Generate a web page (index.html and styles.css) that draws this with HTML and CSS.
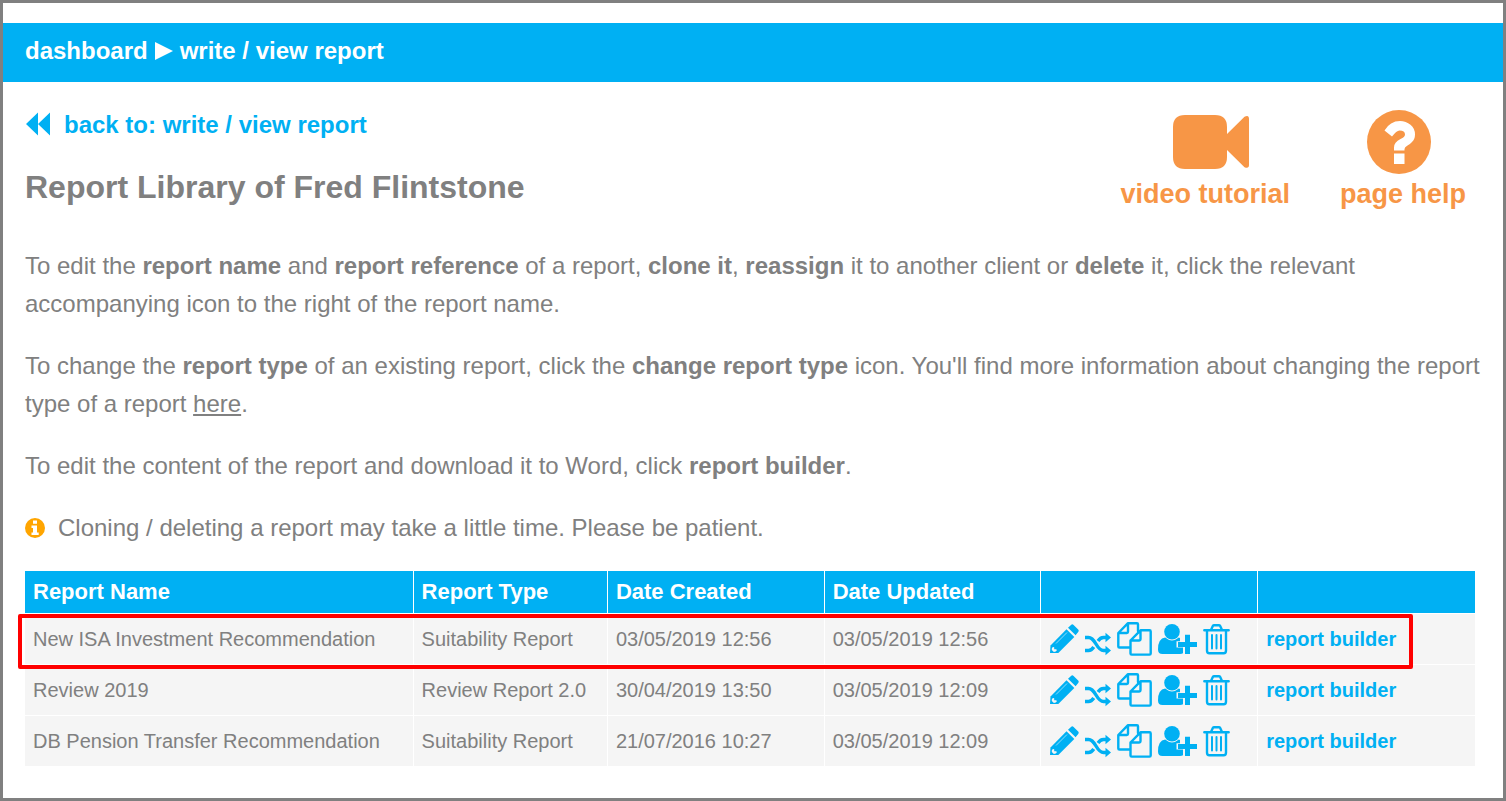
FILE: index.html
```html
<!DOCTYPE html>
<html lang="en">
<head>
<meta charset="utf-8">
<title>Report Library</title>
<link rel="stylesheet" href="styles.css">
</head>
<body>
<svg class="defs" aria-hidden="true">
  <symbol id="pencil" viewBox="0 0 30 36">
    <path d="M1.500 24.500L17.500 8.300L25.300 16L9.300 32H1z"/>
    <path d="M19 6.700L22 3.900Q23.300 2.700 24.600 3.900L29.200 8.500Q30.300 9.800 29.200 11L26.600 14.200z"/>
    <path class="cut" d="M2.900 27L4 25.900L5.200 26.200V28.300H7.400L7.800 29.400L6.700 30.600L4.900 30.900L2.800 28.900z"/>
    <path class="shine" d="M7 22.500L18 11.500"/>
  </symbol>
  <symbol id="shuffle" viewBox="0 0 26 36">
    <path class="line3" d="M0 16.500H3.500C11 16.500 11 29.500 18.500 29.500H22M0 29.500H3.500C6 29.500 7.500 28 8.800 26M13 20C14.300 18 16 16.500 18.500 16.500H22"/>
    <path d="M20.500 11.800L26 16.500L20.500 21.200zM20.500 24.800L26 29.500L20.500 34.200z"/>
  </symbol>
  <symbol id="copy" viewBox="0 0 35 36">
    <path class="line2" d="M12.500 26.500H2.400Q1.300 26.500 1.300 25.400V12L11 2.200H20Q21 2.200 21 3.200V10M11 2.500V10.800Q11 12 9.800 12H1.500"/>
    <path class="line2" d="M23.500 9.300H32.500Q33.700 9.300 33.700 10.500V32.400Q33.700 33.600 32.500 33.600H14.700Q13.500 33.600 13.500 32.400V19.500zM23.500 9.500V18.300Q23.500 19.500 22.300 19.500H13.500"/>
  </symbol>
  <symbol id="adduser" viewBox="0 0 39 36">
    <circle cx="14" cy="10.800" r="7.800"/>
    <path d="M7.200 16.600Q14 22.500 20.800 16.600L22 17V20.300H18.500V26.500H25V32.200Q24 33 22 33H4.500Q0 33 0 28.500Q0 17.500 7.200 16.600z"/>
    <path d="M27 13.700H32V21H39V26H32V33H27V26H20V21H27z"/>
  </symbol>
  <symbol id="trash" viewBox="0 0 28 36">
    <path class="line2" d="M1.300 9.200H25.700M8 9L9.800 5Q10.200 4.200 11.200 4.200H15.800Q16.800 4.200 17.200 5L19 9M4 9.500V29.500Q4 32.200 6.300 32.200H20.700Q23 32.200 23 29.500V9.500"/>
    <path class="line1" d="M9 14V27.500M13.500 14V27.500M18 14V27.500"/>
  </symbol>
</svg>

<div class="page">
  <nav class="crumbs" aria-label="Breadcrumb">
    <a href="#">dashboard</a>
    <svg class="crumb-arrow" viewBox="0 0 18 18" aria-hidden="true"><path d="M0 0L18 9L0 18z"/></svg>
    <a href="#">write / view report</a>
  </nav>

  <main class="content">
    <header class="top">
      <div class="titles">
        <a class="back" href="#">
          <svg viewBox="0 0 26 24" aria-hidden="true"><path d="M1 11L13 -0.500V22.500zM13 11L25 -0.500V22.500z"/></svg>
          back to: write / view report
        </a>
        <h1>Report Library of Fred Flintstone</h1>
      </div>
      <div class="help">
        <a href="#">
          <svg viewBox="-12 0 88 64" width="88" height="64" aria-hidden="true"><path d="M12 5H42Q54 5 54 17V24L71.500 6.800Q76 4.500 76 9V55Q76 59 71.500 57.200L54 40V47Q54 59 42 59H12Q0 59 0 47V17Q0 5 12 5z"/></svg>
          <span>video tutorial</span>
        </a>
        <a href="#">
          <svg viewBox="0 0 71 64" width="71" height="64" aria-hidden="true"><circle cx="32" cy="32" r="32"/><path class="white" d="M17.500 20.500Q23 11 33 11Q39 11 43.500 14.800Q48 18.500 48 24.500Q48 29 45 32Q43 34 40.500 35.500Q37.500 37.300 37.500 39V40.500H27V37.500Q27 32 33.500 29Q38 27 38 24.500Q38 20.500 32.500 20.500Q29.500 20.500 25 26.500zM27 43.500H37.500V54H27z"/></svg>
          <span>page help</span>
        </a>
      </div>
    </header>

    <p>To edit the <b>report name</b> and <b>report reference</b> of a report, <b>clone it</b>, <b>reassign</b> it to another client or <b>delete</b> it, click the relevant accompanying icon to the right of the report name.</p>
    <p>To change the <b>report type</b> of an existing report, click the <b>change report type</b> icon. You'll find more information about changing the report type of a report <a href="#">here</a>.</p>
    <p>To edit the content of the report and download it to Word, click <b>report builder</b>.</p>
    <p class="note">
      <svg viewBox="0 0 20 20" aria-hidden="true"><circle cx="10" cy="10" r="10"/><path class="white" d="M8 2.500H12V5.800H8zM6.500 7.500H12V14.500H13.700V17H6.500V14.500H8V10H6.500z"/></svg>
      Cloning / deleting a report may take a little time. Please be patient.
    </p>

    <div class="reports">
      <table>
        <colgroup><col class="name"><col class="type"><col><col><col><col></colgroup>
        <thead>
          <tr><th>Report Name</th><th>Report Type</th><th>Date Created</th><th>Date Updated</th><th></th><th></th></tr>
        </thead>
        <tbody>
          <tr>
            <td>New ISA Investment Recommendation</td><td>Suitability Report</td><td>03/05/2019 12:56</td><td>03/05/2019 12:56</td>
            <td><div class="actions">
              <button aria-label="Edit"><svg width="30" height="36"><use href="#pencil"/></svg></button>
              <button aria-label="Change report type"><svg width="26" height="36"><use href="#shuffle"/></svg></button>
              <button aria-label="Clone"><svg width="35" height="36"><use href="#copy"/></svg></button>
              <button aria-label="Reassign"><svg width="39" height="36"><use href="#adduser"/></svg></button>
              <button aria-label="Delete"><svg width="28" height="36"><use href="#trash"/></svg></button>
            </div></td>
            <td><a href="#">report builder</a></td>
          </tr>
          <tr>
            <td>Review 2019</td><td>Review Report 2.0</td><td>30/04/2019 13:50</td><td>03/05/2019 12:09</td>
            <td><div class="actions">
              <button aria-label="Edit"><svg width="30" height="36"><use href="#pencil"/></svg></button>
              <button aria-label="Change report type"><svg width="26" height="36"><use href="#shuffle"/></svg></button>
              <button aria-label="Clone"><svg width="35" height="36"><use href="#copy"/></svg></button>
              <button aria-label="Reassign"><svg width="39" height="36"><use href="#adduser"/></svg></button>
              <button aria-label="Delete"><svg width="28" height="36"><use href="#trash"/></svg></button>
            </div></td>
            <td><a href="#">report builder</a></td>
          </tr>
          <tr>
            <td>DB Pension Transfer Recommendation</td><td>Suitability Report</td><td>21/07/2016 10:27</td><td>03/05/2019 12:09</td>
            <td><div class="actions">
              <button aria-label="Edit"><svg width="30" height="36"><use href="#pencil"/></svg></button>
              <button aria-label="Change report type"><svg width="26" height="36"><use href="#shuffle"/></svg></button>
              <button aria-label="Clone"><svg width="35" height="36"><use href="#copy"/></svg></button>
              <button aria-label="Reassign"><svg width="39" height="36"><use href="#adduser"/></svg></button>
              <button aria-label="Delete"><svg width="28" height="36"><use href="#trash"/></svg></button>
            </div></td>
            <td><a href="#">report builder</a></td>
          </tr>
        </tbody>
      </table>
      <div class="highlight"></div>
    </div>
  </main>
</div>
</body>
</html>
```

FILE: styles.css
```css
* { box-sizing: border-box; }

body {
  margin: 0;
  background: #fff;
  color: #808080;
  font-family: "Liberation Sans", Arial, sans-serif;
  font-size: 24px;
  line-height: 38px;
}

.defs { position: absolute; width: 0; height: 0; }

svg { fill: currentColor; flex: none; overflow: visible; }
.white { fill: #fff; }
.cut { fill: #f5f5f5; }
.shine { fill: none; stroke: #8edcf9; stroke-width: 1; }
.line1 { fill: none; stroke: currentColor; stroke-width: 2; stroke-linecap: round; }
.line2 { fill: none; stroke: currentColor; stroke-width: 2.4; stroke-linejoin: round; stroke-linecap: round; }
.line3 { fill: none; stroke: currentColor; stroke-width: 3.4; }

.page {
  min-height: 100vh;
  padding-top: 20px;
  border: 3px solid #808080;
}

.crumbs {
  display: flex;
  align-items: center;
  gap: 7px;
  padding: 9px 22px 12px;
  background: #00b0f3;
  color: #fff;
  font-weight: bold;
}
.crumbs a { color: inherit; text-decoration: none; }
.crumb-arrow { width: 18px; height: 18px; }

.content { padding: 24px 20px 28px 22px; }

.top {
  display: flex;
  justify-content: space-between;
  align-items: flex-start;
  margin-bottom: 34px;
}
.back {
  display: flex;
  align-items: center;
  gap: 13px;
  color: #00b0f3;
  font-weight: bold;
  text-decoration: none;
}
.back svg { width: 26px; height: 24px; }
h1 {
  margin: 24px 0 0;
  font-size: 32px;
  line-height: 38px;
}

.help {
  display: flex;
  gap: 50px;
  padding: 4px 17px 0 0;
}
.help a {
  display: flex;
  flex-direction: column;
  align-items: center;
  gap: 1px;
  color: #f79646;
  font-size: 27px;
  font-weight: bold;
  text-decoration: none;
}
.help svg { display: block; }

p { margin: 0 0 24px; }
p a { color: inherit; }
.note { display: flex; align-items: center; gap: 13px; }
.note svg { width: 20px; height: 20px; color: #ffa500; }

.reports { position: relative; margin-right: 8px; }
table {
  width: 100%;
  table-layout: fixed;
  border-collapse: separate;
  border-spacing: 0;
  font-size: 20px;
}
.name { width: 26.8%; }
.type { width: 13.4%; }
th, td {
  padding: 0 8px;
  text-align: left;
  white-space: nowrap;
  border-right: 1px solid #fff;
  border-bottom: 1px solid #fff;
}
th:last-child, td:last-child { border-right: 0; }
th {
  height: 43px;
  background: #00b0f3;
  color: #fff;
  font-size: 22px;
}
td {
  height: 51px;
  background: #f5f5f5;
}
td a { color: #00b0f3; font-weight: bold; text-decoration: none; }

.actions { display: flex; gap: 6px; color: #00b0f3; }
.actions button {
  display: flex;
  padding: 0;
  border: 0;
  background: none;
  color: inherit;
  cursor: pointer;
}

.highlight {
  position: absolute;
  top: 43px;
  left: -7px;
  right: 62px;
  height: 55px;
  border: 4px solid #f00;
  border-radius: 2px;
  pointer-events: none;
}
```
